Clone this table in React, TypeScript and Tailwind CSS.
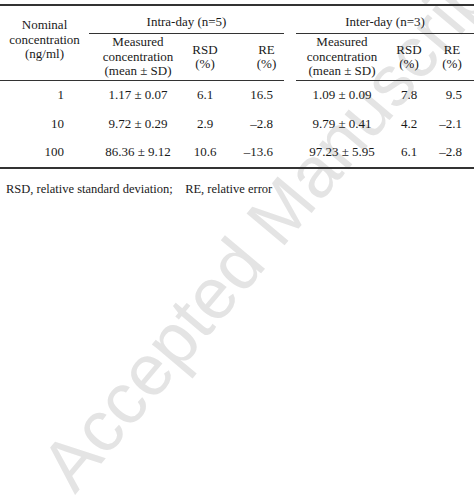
const rows = [
  { nominal: '1', intraMean: '1.17 ± 0.07', intraRsd: '6.1', intraRe: '16.5', interMean: '1.09 ± 0.09', interRsd: '7.8', interRe: '9.5' },
  { nominal: '10', intraMean: '9.72 ± 0.29', intraRsd: '2.9', intraRe: '–2.8', interMean: '9.79 ± 0.41', interRsd: '4.2', interRe: '–2.1' },
  { nominal: '100', intraMean: '86.36 ± 9.12', intraRsd: '10.6', intraRe: '–13.6', interMean: '97.23 ± 5.95', interRsd: '6.1', interRe: '–2.8' },
];

export default function App() {
  return (
    <div className="relative w-[474px] h-[495px] overflow-hidden bg-white font-['Liberation_Serif',serif] text-[13px] leading-[14.5px] text-[#1a1a1a]">
      {/* watermark */}
      <div className="absolute left-[75px] top-[434px] origin-[0_61px] -rotate-[50deg] whitespace-nowrap font-['Liberation_Sans',sans-serif] text-[72px] leading-none text-[#e4e4e4] select-none">
        Accepted Manuscript
      </div>

      <div className="relative">
        <div className="mt-[4px] border-t-2 border-b-2 border-[#333]">
          <div className="grid grid-cols-[89px_98px_36px_61px_12px_92px_42px_44px]">
            {/* header row 1 */}
            <div className="row-span-2 border-b border-[#333] pt-[12px] text-center">
              Nominal
              <br />
              concentration
              <br />
              (ng/ml)
            </div>
            <div className="col-span-3 h-[28px] border-b border-[#333] pt-[9px] text-center">Intra-day (n=5)</div>
            <div className="row-span-2"></div>
            <div className="col-span-3 h-[28px] border-b border-[#333] pt-[9px] text-center">Inter-day (n=3)</div>

            {/* header row 2 */}
            <div className="h-[47px] border-b border-[#333] flex items-center justify-center text-center">
              <span>Measured<br />concentration<br />(mean ± SD)</span>
            </div>
            <div className="h-[47px] border-b border-[#333] flex items-center justify-center text-center">
              <span>RSD<br />(%)</span>
            </div>
            <div className="h-[47px] border-b border-[#333] flex items-center justify-center pl-[26px] text-center">
              <span>RE<br />(%)</span>
            </div>
            <div className="h-[47px] border-b border-[#333] flex items-center justify-center text-center">
              <span>Measured<br />concentration<br />(mean ± SD)</span>
            </div>
            <div className="h-[47px] border-b border-[#333] flex items-center justify-center text-center">
              <span>RSD<br />(%)</span>
            </div>
            <div className="h-[47px] border-b border-[#333] flex items-center justify-center text-center">
              <span>RE<br />(%)</span>
            </div>

            {rows.map((r) => (
              <div key={r.nominal} className="contents">
                <div className="h-[28.5px] flex items-center justify-end pr-[25px]">{r.nominal}</div>
                <div className="h-[28.5px] flex items-center justify-center">{r.intraMean}</div>
                <div className="h-[28.5px] flex items-center justify-center">{r.intraRsd}</div>
                <div className="h-[28.5px] flex items-center justify-end pr-[11px]">{r.intraRe}</div>
                <div className="h-[28.5px]"></div>
                <div className="h-[28.5px] flex items-center justify-center">{r.interMean}</div>
                <div className="h-[28.5px] flex items-center justify-center">{r.interRsd}</div>
                <div className="h-[28.5px] flex items-center justify-end pr-[12px]">{r.interRe}</div>
              </div>
            ))}
          </div>
        </div>

        <p className="mt-[13px] pl-[6px] whitespace-pre text-[12.5px]">
          RSD, relative standard deviation;{'    '}RE, relative error
        </p>
      </div>
    </div>
  );
}
